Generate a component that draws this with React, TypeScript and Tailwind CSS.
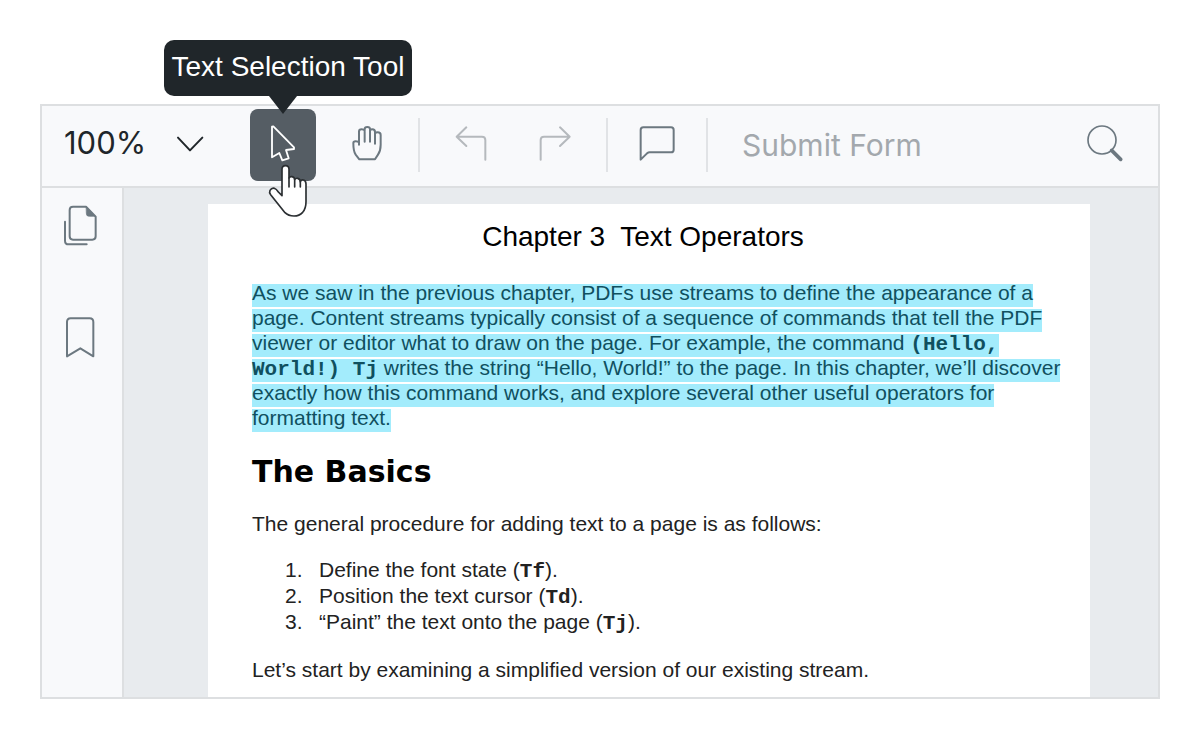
import React, { useState } from "react";

const iconProps = {
  width: 40,
  height: 40,
  fill: "none",
  stroke: "currentColor",
  strokeLinecap: "round",
  strokeLinejoin: "round",
  "aria-hidden": true,
} as const;

function ToolButton({
  label,
  className,
  children,
}: {
  label: string;
  className: string;
  children: React.ReactNode;
}) {
  return (
    <button
      type="button"
      aria-label={label}
      className={`flex h-[72px] shrink-0 items-center justify-center rounded-lg ${className}`}
    >
      {children}
    </button>
  );
}

function Separator() {
  return <span className="h-[54px] w-[2px] shrink-0 bg-[#e1e3e6]" />;
}

function ZoomSelect() {
  const [zoom, setZoom] = useState("100%");
  return (
    <div className="mr-[22px] grid w-[146px] shrink-0 items-center text-[#20262a]">
      <select
        aria-label="Zoom"
        value={zoom}
        onChange={(e) => setZoom(e.target.value)}
        className="col-start-1 row-start-1 h-[72px] w-full appearance-none bg-transparent pb-1 font-[Inter,sans-serif] text-[31px]"
      >
        <option>50%</option>
        <option>100%</option>
        <option>200%</option>
      </select>
      <svg
        {...iconProps}
        viewBox="420 285 120 120"
        strokeWidth={6}
        className="pointer-events-none col-start-1 row-start-1 justify-self-end"
      >
        <path d="M444 323 480 361 517 323" />
      </svg>
    </div>
  );
}

function SelectionTool() {
  return (
    <div className="relative shrink-0">
      <ToolButton label="Text Selection Tool" className="w-[66px] bg-[#555d64] text-white">
        <svg {...iconProps} viewBox="699 285 120 120" strokeWidth={5.5}>
          <path d="M726 290V382L748 369 757 391 776 385 768 360 792 357V352L730 289Z" />
        </svg>
      </ToolButton>
      <div
        role="tooltip"
        className="absolute bottom-[85px] left-[-86px] flex h-14 w-[248px] items-center justify-center rounded-[10px] bg-[#20262a] pb-[2px] text-[28px] whitespace-nowrap text-white"
      >
        Text Selection Tool
        <svg
          width={28}
          height={18}
          viewBox="0 0 28 18"
          className="absolute top-full left-[105px] text-[#20262a]"
          aria-hidden
        >
          <path d="M0 0H28L14 18Z" fill="currentColor" />
        </svg>
      </div>
      <svg
        width={40}
        height={54}
        viewBox="714 402 120 162"
        fill="#fff"
        stroke="#2b2f32"
        strokeWidth={5}
        strokeLinecap="round"
        strokeLinejoin="round"
        className="pointer-events-none absolute top-[55px] left-[18px] z-10"
        aria-hidden
      >
        <path d="M756 497V418Q756 407 766.5 407 777 407 777 418V444Q779 439 786 440 794 441 794 449 797 444 803 445 811 447 811 455 814 449 820 450 828 452 828 462V515Q828 535 818 547 808 558 792 558 775 558 765 548L722 494Q717 487 720 481 725 473 733 475 739 477 745 486Z" />
        <path d="M777 444V471M794 449V471M811 455V471" fill="none" />
      </svg>
    </div>
  );
}

function Toolbar() {
  return (
    <header className="flex items-center gap-[18px] border-b-2 border-[#dddfe1] bg-[#f8f9fb] pt-[3px] pr-5 pb-[5px] pl-[22px] text-[#6c7880]">
      <ZoomSelect />
      <SelectionTool />
      <ToolButton label="Pan" className="w-[66px]">
        <svg {...iconProps} viewBox="19 45 120 120" strokeWidth={6}>
          <path d="M55 104V65Q55 58 63 58 70 58 72 62M72 95V58Q72 51 80 51 88 51 88 58V95M88 61Q90 58 95 58 103 58 103 66V101M103 70Q105 67 111 67 120 67 120 75V104Q120 122 112 134L103 148H56L45 134Q38 124 38 99 38 94 45 94 53 94 55 98" />
        </svg>
      </ToolButton>
      <Separator />
      <ToolButton label="Undo" className="w-[66px] text-[#b5b9bd]">
        <svg {...iconProps} viewBox="328 45 120 120" strokeWidth={6}>
          <path d="M374 52 345 80 374 108M345 80H421Q431 80 431 90V149" />
        </svg>
      </ToolButton>
      <ToolButton label="Redo" className="w-[66px] text-[#b5b9bd]">
        <svg {...iconProps} viewBox="585 45 120 120" strokeWidth={6}>
          <path d="M660 52 689 80 660 108M689 80H612Q602 80 602 90V149" />
        </svg>
      </ToolButton>
      <Separator />
      <ToolButton label="Comment" className="w-[62px]">
        <svg {...iconProps} viewBox="888 45 120 120" strokeWidth={6}>
          <path d="M899 149V60Q899 52 907 52H990Q998 52 998 60V119Q998 127 990 127H926Q922 127 918 130Z" />
        </svg>
      </ToolButton>
      <Separator />
      <button
        type="button"
        className="h-[72px] shrink-0 px-4 font-[Inter,sans-serif] text-[30px] text-[#a3a8ad]"
      >
        Submit Form
      </button>
      <ToolButton label="Search" className="ml-auto w-[66px]">
        <svg {...iconProps} viewBox="1094 75 120 120" strokeWidth={5}>
          <circle cx="1145" cy="120" r="42" />
          <path d="M1174 151 1201 178" strokeWidth={11} />
        </svg>
      </ToolButton>
    </header>
  );
}

function Sidebar() {
  return (
    <nav className="flex w-[82px] shrink-0 flex-col gap-9 border-r-2 border-[#dddfe1] bg-[#f8f9fb] text-[#6c7880]">
      <button type="button" aria-label="Pages" className="flex h-[76px] items-center justify-center">
        <svg {...iconProps} width={48} height={48} viewBox="54 36 144 144" strokeWidth={6}>
          <path d="M99 50H138L167 80V139Q167 149 157 149H99Q89 149 89 139V60Q89 50 99 50Z" />
          <path d="M139 51 166 79H148Q139 79 139 71Z" fill="currentColor" strokeWidth={2} />
          <path d="M75 95V152Q75 163 86 163H140" />
        </svg>
      </button>
      <button type="button" aria-label="Bookmarks" className="flex h-[76px] items-center justify-center">
        <svg {...iconProps} width={48} height={48} viewBox="54 372 144 144" strokeWidth={6}>
          <path d="M81 499V396Q81 385 92 385H149Q160 385 160 396V499L121 475Z" />
        </svg>
      </button>
    </nav>
  );
}

function Code({ children }: { children: React.ReactNode }) {
  return (
    <code className="font-['Liberation_Mono','Courier_New',monospace] text-[21px] leading-none font-bold">
      {children}
    </code>
  );
}

const selectedLines: React.ReactNode[] = [
  "As we saw in the previous chapter, PDFs use streams to define the appearance of a",
  "page. Content streams typically consist of a sequence of commands that tell the PDF",
  <>
    viewer or editor what to draw on the page. For example, the command <Code>(Hello,</Code>
  </>,
  <>
    <Code>World!) Tj</Code> writes the string “Hello, World!” to the page. In this chapter, we’ll discover
  </>,
  "exactly how this command works, and explore several other useful operators for",
  "formatting text.",
];

const steps = [
  { text: "Define the font state", op: "Tf" },
  { text: "Position the text cursor", op: "Td" },
  { text: "“Paint” the text onto the page", op: "Tj" },
];

function DocumentPage() {
  return (
    <article className="w-full max-w-[882px] bg-white px-11 pt-[17px] pb-[14px] text-[21px] leading-[26px] text-[#222]">
      <h1 className="pr-3 text-center text-[28px] leading-8 whitespace-pre-wrap text-black">
        {"Chapter 3  Text Operators"}
      </h1>
      <p className="mt-[31px] flex flex-col gap-[2px] text-[#10505f]">
        {selectedLines.map((line, i) => (
          <span key={i} className="h-[23px] w-fit bg-[#a3ecfc] leading-[17px] whitespace-nowrap">
            {line}
          </span>
        ))}
      </p>
      <h2 className="mt-[22px] font-['DejaVu_Sans',Verdana,sans-serif] text-[30px] leading-9 font-bold text-black">
        The Basics
      </h2>
      <p className="mt-[21px]">The general procedure for adding text to a page is as follows:</p>
      <ol className="mt-5 pl-[33px]">
        {steps.map((step, i) => (
          <li key={step.op} className="flex">
            <span className="w-[34px] shrink-0">{i + 1}.</span>
            <span>
              {step.text} (<Code>{step.op}</Code>).
            </span>
          </li>
        ))}
      </ol>
      <p className="mt-[22px]">Let’s start by examining a simplified version of our existing stream.</p>
    </article>
  );
}

export default function App() {
  return (
    <div className="bg-white px-10 pt-[104px] pb-10 font-['Liberation_Sans',Arial,sans-serif]">
      <div className="border-2 border-[#dddfe1]">
        <Toolbar />
        <div className="flex">
          <Sidebar />
          <main className="flex min-w-0 flex-1 bg-[#e8ebee] pt-4 pr-[68px] pl-[84px]">
            <DocumentPage />
          </main>
        </div>
      </div>
    </div>
  );
}
